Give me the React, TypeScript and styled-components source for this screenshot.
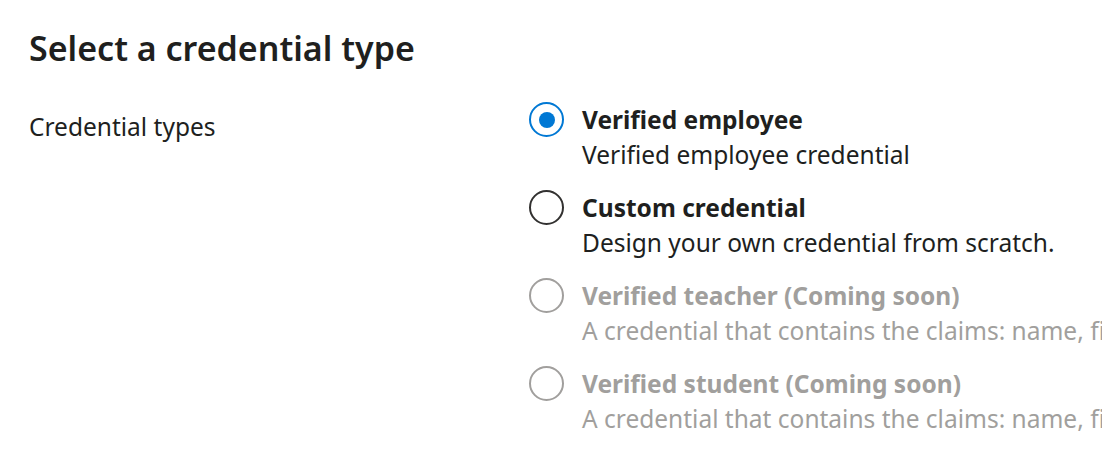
import { createGlobalStyle, styled } from 'styled-components';

const GlobalStyle = createGlobalStyle`
  html, body {
    margin: 0;
    padding: 0;
    background: #ffffff;
    overflow: hidden;
  }
  body {
    font-family: "Noto Sans", "Open Sans", sans-serif;
    color: #201f1e;
  }
`;

interface OptionType {
  title: string;
  description: string;
  checked?: boolean;
  disabled?: boolean;
}

const options: OptionType[] = [
  { title: 'Verified employee', description: 'Verified employee credential', checked: true },
  { title: 'Custom credential', description: 'Design your own credential from scratch.' },
  {
    title: 'Verified teacher (Coming soon)',
    description: 'A credential that contains the claims: name, first name, last name, school',
    disabled: true,
  },
  {
    title: 'Verified student (Coming soon)',
    description: 'A credential that contains the claims: name, first name, last name, school',
    disabled: true,
  },
];

const App = () => {
  return (
    <Page>
      <GlobalStyle />
      <Title>Select a credential type</Title>
      <FieldRow>
        <FieldLabel>Credential types</FieldLabel>
        <OptionList>
          {options.map((option) => (
            <Option key={option.title} $disabled={option.disabled}>
              <Circle $checked={option.checked} $disabled={option.disabled} />
              <OptionText>
                <OptionTitle $disabled={option.disabled}>{option.title}</OptionTitle>
                <OptionDescription $disabled={option.disabled}>{option.description}</OptionDescription>
              </OptionText>
            </Option>
          ))}
        </OptionList>
      </FieldRow>
    </Page>
  );
};

const Page = styled.div`
  padding: 22px 0 0 29px;
  width: 1400px;
`;

const Title = styled.h2`
  margin: 0 0 28px;
  font-size: 34px;
  font-weight: 600;
  line-height: 52px;
`;

const FieldRow = styled.div`
  display: grid;
  grid-template-columns: 500px 1fr;
`;

const FieldLabel = styled.div`
  font-size: 24.5px;
  line-height: 35px;
  padding-top: 7px;
`;

const OptionList = styled.div`
  display: flex;
  flex-direction: column;
  gap: 18px;
`;

const Option = styled.label<{ $disabled?: boolean }>`
  display: flex;
  align-items: flex-start;
  gap: 18px;
  cursor: ${({ $disabled }) => ($disabled ? 'default' : 'pointer')};
`;

const Circle = styled.span<{ $checked?: boolean; $disabled?: boolean }>`
  position: relative;
  flex: none;
  box-sizing: border-box;
  width: 35px;
  height: 35px;
  border-radius: 50%;
  border: 2px solid
    ${({ $checked, $disabled }) => ($disabled ? '#a19f9d' : $checked ? '#0078d4' : '#323130')};

  &::after {
    content: '';
    display: ${({ $checked }) => ($checked ? 'block' : 'none')};
    position: absolute;
    top: 50%;
    left: 50%;
    width: 16px;
    height: 16px;
    margin: -8px 0 0 -8px;
    border-radius: 50%;
    background: #0078d4;
  }
`;

const OptionText = styled.div`
  display: flex;
  flex-direction: column;
`;

const OptionTitle = styled.div<{ $disabled?: boolean }>`
  font-size: 24.5px;
  font-weight: 700;
  line-height: 35px;
  white-space: nowrap;
  color: ${({ $disabled }) => ($disabled ? '#a19f9d' : '#201f1e')};
`;

const OptionDescription = styled.div<{ $disabled?: boolean }>`
  font-size: 24.5px;
  line-height: 35px;
  white-space: nowrap;
  color: ${({ $disabled }) => ($disabled ? '#a19f9d' : '#201f1e')};
`;

export default App;
